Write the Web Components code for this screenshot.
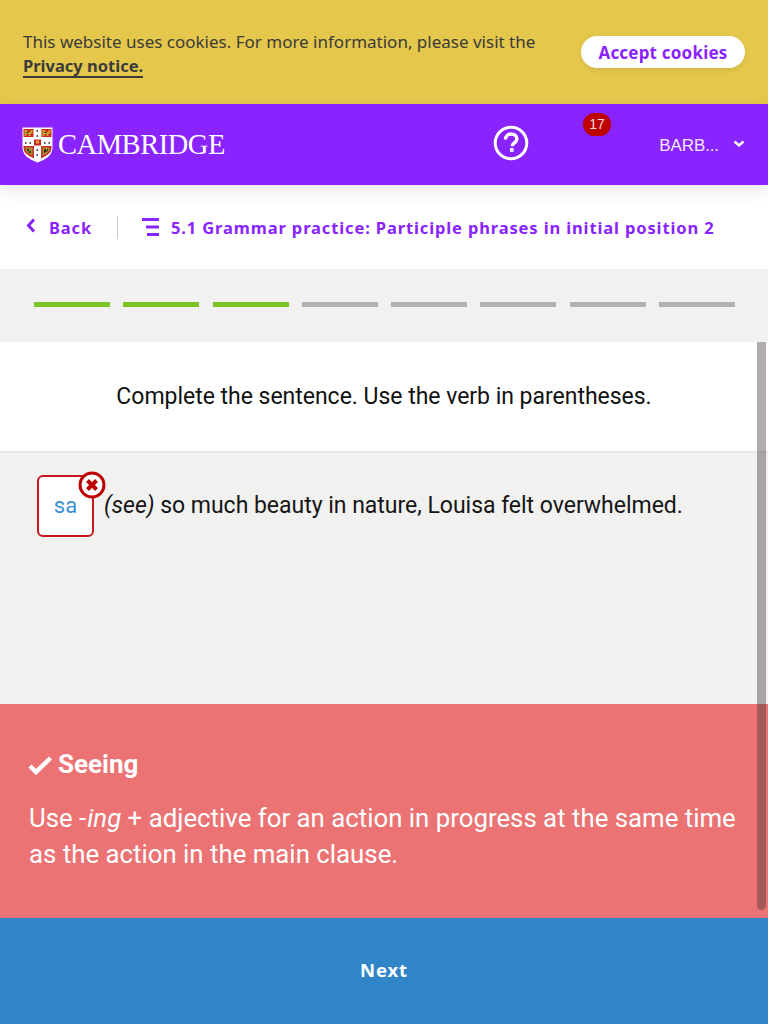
<!DOCTYPE html>
<html lang="en"><head><meta charset="utf-8"><title>Grammar practice</title>
<style>
html,body{margin:0;padding:0;height:100%}
body{width:768px;height:1024px;overflow:hidden;font-family:Roboto,sans-serif}
</style></head><body>
<practice-app></practice-app>
<script>
function def(name, html){
  customElements.define(name, class extends HTMLElement{
    constructor(){super();const r=this.attachShadow({mode:'open'});r.innerHTML=html;}
  });
}
const MUL='"Noto Sans",Lato,sans-serif';
const lion=(x,y)=>`<path d="M${x} ${y}h10v8h-10z" fill="#d0271d"/><path d="M${x+1} ${y+1}h3v2h3v-2h2v3l-2 1v2h-2v-2h-2v2h-2z" fill="#c5a52e"/><path d="M${x+3} ${y+3}h2v1h-2z" fill="#2c2410"/>`;
def('cookie-bar',`<style>
:host{display:flex;box-sizing:border-box;height:104px;background:#e4c74b;padding:0 23px;align-items:flex-start;justify-content:space-between;font-family:${MUL};color:#3b3b3b}
.t{font-size:17px;line-height:24px;padding-top:30px;width:530px}
a{font-weight:700;font-size:16.500px;color:inherit;text-decoration:none;border-bottom:2px solid #3b3b3b;display:inline-block;line-height:20px}
button{margin-top:36px;height:32px;width:164px;border:0;border-radius:16px;background:#fff;color:#8a24ff;font:700 17px ${MUL};letter-spacing:.2px;box-shadow:0 2px 6px rgba(0,0,0,.08);padding:0}
</style><div class="t">This website uses cookies. For more information, please visit the <a>Privacy notice.</a></div><button>Accept cookies</button>`);
def('cam-crest',`<style>:host{display:block;width:31px;height:36px}svg{display:block}</style>
<svg width="31" height="36" viewBox="0 0 31 36">
<path d="M.5.500h30v20c0 8-7 12-15 15C7.500 32.500.5 28.500.5 20.500z" fill="#fff"/>
${lion(1.5,2)}${lion(19.5,2)}
<path d="M1.500 19h10.500v12.500c-5-2.500-10.500-5-10.500-11zM19 19h10.500v1.500C29.500 26.500 24 29 19 31.500z" fill="#c5302a"/>
<path d="M3.500 20.500h7v8c-3-1-7-3.500-7-6zM20.500 20.500h7v2c0 2.500-4 5-7 6z" fill="#a89029"/>
<path d="M5 22h2v2h2v2H7v-2H5zM22 22h2v2h2v-2h-1v3h-2v1h-1z" fill="#3b2a12"/>
<path d="M1.500 11.500h10v1h-10zM19.500 11.500h10v1h-10z" fill="#fff"/>
<path d="M12 12.500h7v6h-7z" fill="#c9281e"/><path d="M14 13.500h3v3h-3z" fill="#d8a33a"/>
<path d="M14.500 3h1.500v2h-1.500zM14.500 8h1.500v2h-1.500zM14.500 22h1.500v2h-1.500zM14.500 27h1.500v2h-1.500zM3 15h1.500v2H3zM7.500 15H9v2H7.500zM22 15h1.500v2H22zM26.500 15H28v2h-1.500z" fill="#555"/>
</svg>`);
def('app-header',`<style>
:host{display:flex;position:relative;box-sizing:border-box;height:81px;background:#8a24ff;align-items:center;padding:0 23px 0 22px;color:#fff;box-shadow:0 6px 18px rgba(0,0,0,.09)}
.logo{display:flex;align-items:center;gap:5px;width:471px;padding-top:1px}
.word{font:400 28.500px/36px "Liberation Serif",serif;letter-spacing:-.45px;margin-top:-1px}
.help{display:block;width:36px;height:36px;margin-top:-3px}
.badge{position:absolute;left:583px;top:9px;width:28px;height:23px;border-radius:12px;background:#bd0000;color:#f5dcdc;font:400 14px/23px "Liberation Sans",sans-serif;text-align:center}
.user{margin-left:auto;display:flex;align-items:center;gap:14px;font:400 17px/20px "Liberation Sans",sans-serif;color:#f3e8ff;letter-spacing:-.1px;padding-top:3px}
</style>
<div class="logo"><cam-crest></cam-crest><span class="word">CAMBRIDGE</span></div>
<svg class="help" viewBox="0 0 36 36"><circle cx="18" cy="18" r="15.800" fill="none" stroke="#fff" stroke-width="3"/><path d="M12.500 14.500c0-3.500 2.500-5.500 5.700-5.500 3.300 0 5.600 2 5.600 4.800 0 2.500-1.400 3.500-3 4.600-1.300.9-1.500 1.500-1.500 2.900" fill="none" stroke="#fff" stroke-width="3.400"/><rect x="17" y="23" width="3.600" height="3.800" fill="#fff"/></svg>
<span class="badge">17</span>
<div class="user"><span>BARB...</span><svg width="12" height="8" viewBox="0 0 12 8" style="margin-top:-4px"><path d="M1.500 1.500L6 5.500l4.500-4" fill="none" stroke="#fff" stroke-width="2.400"/></svg></div>`);
def('crumb-nav',`<style>
:host{display:flex;box-sizing:border-box;height:84px;background:#fff;align-items:center;color:#8a24ff;font:700 16.500px ${MUL};padding:0 0 0 26px;letter-spacing:.87px}
.back{display:flex;align-items:center;gap:13px;width:91px}
.sep{width:1px;height:23px;background:#ccc;margin-right:24px}
.title{margin-left:11px;white-space:nowrap}
svg{display:block}
</style><div class="back"><svg width="10" height="15" viewBox="0 0 10 15" style="margin-top:-3px"><path d="M8 1.500L2.500 7.500 8 13.500" fill="none" stroke="#8a24ff" stroke-width="3"/></svg><span>Back</span></div><div class="sep"></div>
<svg width="18" height="18" viewBox="0 0 18 18"><path d="M0 1.500h17M4 9h13M5 16.500h12" stroke="#8a24ff" stroke-width="2.800"/></svg>
<span class="title">5.1 Grammar practice: Participle phrases in initial position 2</span>`);
def('progress-steps',`<style>
:host{display:flex;box-sizing:border-box;height:73px;background:#f1f1f0;padding:33px 33px 0 34px;justify-content:space-between}
i{display:block;width:76px;height:5px;background:#b1b1af}
i.d{background:#7cc324}
</style><i class="d"></i><i class="d"></i><i class="d"></i><i></i><i></i><i></i><i></i><i></i>`);
def('answer-box',`<style>
:host{display:inline-block;position:relative;box-sizing:border-box;width:57px;height:62px;background:#fff;border:2px solid #c8161d;border-radius:6px;color:#3d93d6;font:400 22px/57px Roboto,sans-serif;text-align:center;flex:none}
svg{position:absolute;left:39px;top:-6px;display:block}
</style><slot></slot><svg width="28" height="28" viewBox="0 0 28 28"><circle cx="14" cy="14" r="12" fill="#fff" stroke="#bd0000" stroke-width="3"/><path d="M9.500 9.500l9 9M18.500 9.500l-9 9" stroke="#bd0000" stroke-width="4"/></svg>`);
def('question-area',`<style>
:host{display:block;box-sizing:border-box;height:362px;background:#f1f1f0}
.ins{box-sizing:border-box;height:111px;background:#fff;border-bottom:2px solid #e6e6e5;text-align:center;font:400 23px/110px Roboto,sans-serif;color:#111;letter-spacing:-.02px}
.q{display:flex;gap:10px;padding:22px 0 0 37px;font:400 23px/62px Roboto,sans-serif;color:#151515;letter-spacing:-.02px;white-space:pre}
.q div{line-height:62px;height:62px}
</style><div class="ins">Complete the sentence. Use the verb in parentheses.</div>
<div class="q"><answer-box>sa</answer-box><div><em>(see)</em> so much beauty in nature, Louisa felt overwhelmed.</div></div>`);
def('feedback-panel',`<style>
:host{display:block;box-sizing:border-box;height:214px;background:#ec7373;color:#fff;padding:43px 29px 0;font-family:Roboto,sans-serif}
.h{display:flex;align-items:center;gap:5px;font:700 26px/34px Roboto,sans-serif}
p{margin:19px 0 0;font:400 25.800px/36px Roboto,sans-serif;width:720px}
p span{display:block;white-space:nowrap}
em{margin-left:1px}
svg{margin-left:-1px}
</style><div class="h"><svg width="25" height="20" viewBox="0 0 25 20" style="margin-top:2px"><path d="M2 11l6 6L22.500 3" fill="none" stroke="#fff" stroke-width="4.500"/></svg><span>Seeing</span></div>
<p><span>Use -<em>ing</em> + adjective for an action in progress at the same time</span><span>as the action in the main clause.</span></p>`);
def('next-bar',`<style>
:host{display:flex;box-sizing:border-box;height:106px;background:#3085c7;align-items:center;justify-content:center;color:#fff;font:700 18.500px/1 ${MUL};letter-spacing:.9px;padding-bottom:2px}
</style>Next`);
def('practice-app',`<style>
:host{display:flex;flex-direction:column;position:relative;width:768px;height:1024px;overflow:hidden;background:#fff}
app-header{z-index:1}
.thumb{position:absolute;left:757px;top:342px;width:9px;height:568px;background:rgba(60,50,50,.4);border-radius:0 0 5px 5px}
</style>
<cookie-bar></cookie-bar><app-header></app-header><crumb-nav></crumb-nav><progress-steps></progress-steps><question-area></question-area><feedback-panel></feedback-panel><next-bar></next-bar><div class="thumb"></div>`);
</script></body></html>
